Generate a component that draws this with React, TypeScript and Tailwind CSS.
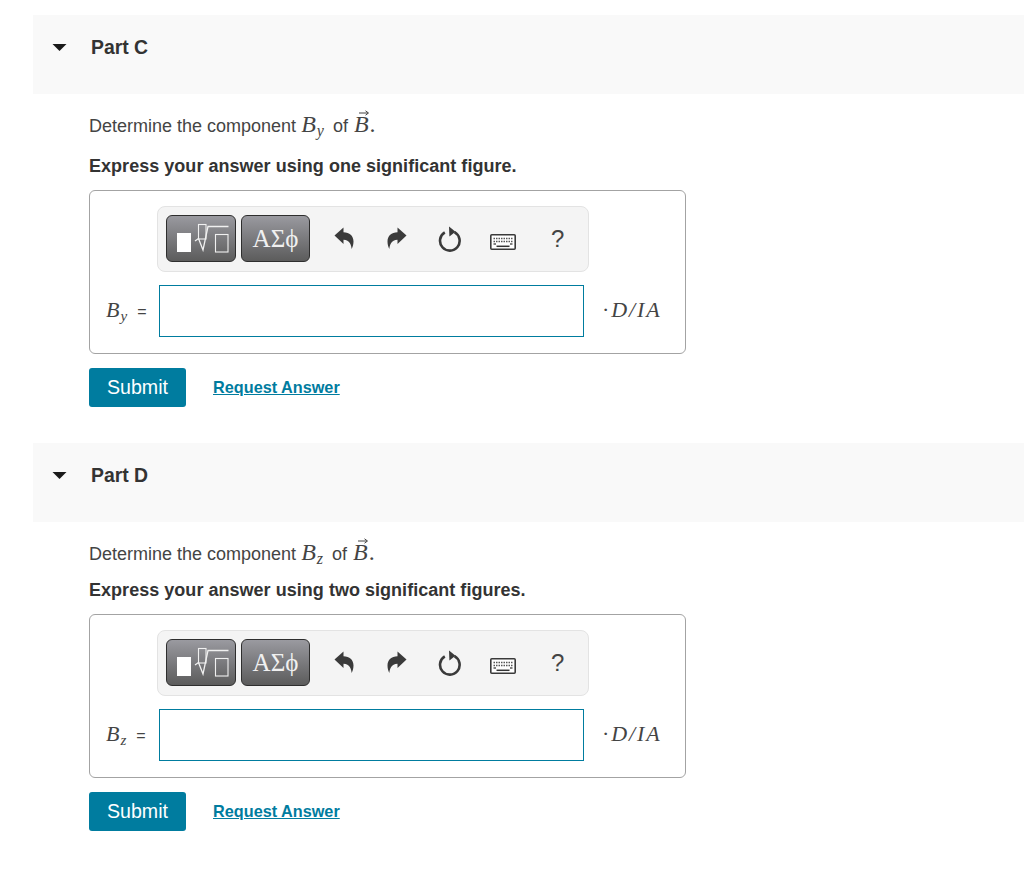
import React from 'react';

const mathFont = "font-['Liberation_Serif',serif] italic";

function Triangle() {
  return (
    <svg width="15" height="7" viewBox="0 0 15 7" className="shrink-0">
      <path d="M0.5 0H14.5L7.5 7Z" fill="#1a1a1a" />
    </svg>
  );
}

function UndoIcon({ flip }: { flip?: boolean }) {
  return (
    <svg width="20" height="24" viewBox="0 0 20 24" className={flip ? '-scale-x-100' : ''}>
      <path d="M0.5 9.5 L9.5 1.5 V6.2 C15.5 6.4 19.5 9.6 19.5 15.5 C19.5 18.5 18.6 21.2 17.6 23 C17.4 19 15.8 14.2 9.5 13.8 V18 Z" fill="#3a3a3a" />
    </svg>
  );
}

function ResetIcon() {
  return (
    <svg width="24" height="26" viewBox="0 0 24 26">
      <path d="M16.5 6.2 A9.8 9.8 0 1 1 6.8 6.4" fill="none" stroke="#3a3a3a" strokeWidth="2.6" />
      <path d="M11 0.5 L17.5 5.8 L11.4 10.5 Z" fill="#3a3a3a" />
    </svg>
  );
}

function KeyboardIcon() {
  return (
    <svg width="26" height="16" viewBox="0 0 26 16">
      <rect x="0.8" y="0.8" width="24.4" height="14.4" rx="1" fill="#fff" stroke="#3a3a3a" strokeWidth="1.6" />
      <path d="M3.5 4.5H22.5M3.5 7.5H22.5" stroke="#555" strokeWidth="1.6" strokeDasharray="1.5 1" />
      <path d="M20 10H22.5M3.5 10H6" stroke="#555" strokeWidth="1.5" />
      <path d="M6.5 12.3H19.5" stroke="#333" strokeWidth="1.5" />
    </svg>
  );
}

function TemplateIcon() {
  return (
    <svg width="68" height="45" viewBox="0 0 68 45">
      <rect x="10" y="17" width="14" height="19" fill="#fff" />
      <rect x="31.5" y="8.5" width="7.5" height="14.5" fill="none" stroke="#f0f0f0" strokeWidth="1.1" />
      <path d="M28 25 L31.5 22.5 L36 34 L41 10.5 H61.5" fill="none" stroke="#f0f0f0" strokeWidth="1.3" />
      <rect x="48.5" y="18.5" width="12.5" height="17.5" fill="none" stroke="#f0f0f0" strokeWidth="1.1" />
    </svg>
  );
}

function InlineSymbol({ sub }: { sub: string }) {
  return (
    <span className={`${mathFont} text-[24px] leading-none text-[#444] inline-flex items-baseline mr-[4px]`}>
      B
      <span className="text-[16px] leading-none ml-[1px] translate-y-[4px] inline-block">{sub}</span>
    </span>
  );
}

function VectorB() {
  return (
    <span className={`${mathFont} relative text-[24px] leading-none text-[#444] ml-[1px] mr-[1px]`}>
      B
      <span className="absolute left-[5px] top-[-2px]">
        <svg width="10" height="7" viewBox="0 0 10 7" className="block">
          <path d="M0 4H9M6.5 1.8L9.5 4L6.5 6.2" fill="none" stroke="#444" strokeWidth="1" />
        </svg>
      </span>
    </span>
  );
}

function AnswerBox({ sub }: { sub: string }) {
  return (
    <div className="w-[597px] h-[164px] rounded-[6px] border border-[#a3a3a3] pt-[15px] flex flex-col">
      <div className="ml-[67px] w-[432px] h-[66px] rounded-[8px] border border-[#e3e3e3] bg-[#f4f4f4] flex items-start pt-[8px] pl-[8px]">
        <div className="w-[70px] h-[47px] rounded-[6px] border border-[#2e2e2e] bg-gradient-to-b from-[#9a9aa0] to-[#5c5c5c]">
          <TemplateIcon />
        </div>
        <div className="ml-[5px] w-[69px] h-[47px] rounded-[6px] border border-[#2e2e2e] bg-gradient-to-b from-[#9a9aa0] to-[#5c5c5c] flex items-center justify-center font-['Liberation_Serif',serif] text-[25px] text-[#f0f0f0]">
          ΑΣϕ
        </div>
        <div className="ml-[24px] mt-[11px] w-[20px] flex justify-center"><UndoIcon /></div>
        <div className="ml-[33px] mt-[11px] w-[20px] flex justify-center"><UndoIcon flip /></div>
        <div className="ml-[31px] mt-[11px] w-[24px] flex justify-center"><ResetIcon /></div>
        <div className="ml-[28px] mt-[19px] w-[26px] flex justify-center"><KeyboardIcon /></div>
        <div className="ml-[35px] mt-[6px] font-['Liberation_Sans',sans-serif] text-[24px] text-[#444]">?</div>
      </div>
      <div className="mt-[13px] flex items-center">
        <div className="w-[69px] pl-[16px] flex items-baseline whitespace-nowrap -mt-[3px]">
          <span className={`${mathFont} text-[22px] leading-none text-[#444]`}>B</span>
          <span className={`${mathFont} text-[15px] leading-none text-[#444] ml-[1px] translate-y-[4px]`}>{sub}</span>
          <span className="ml-[10px] text-[16px] leading-none text-[#444]">=</span>
        </div>
        <div className="w-[425px] h-[52px] border border-[#007c9f] bg-white" />
        <div className={`${mathFont} ml-[18px] -mt-[3px] text-[22px] leading-none text-[#444] tracking-[1.9px] whitespace-nowrap`}>
          <span className="not-italic">·</span>D/IA
        </div>
      </div>
    </div>
  );
}

function Part({ title, sub, fig, textGap, boxGap, titleGap }: { title: string; sub: string; fig: string; textGap: string; boxGap: string; titleGap: string }) {
  return (
    <section>
      <div className="ml-[33px] h-[79px] bg-[#f9f9f9] flex items-start pt-[22px] pl-[19px]">
        <div className="h-[20px] flex items-center"><Triangle /></div>
        <h2 className={`ml-[24px] ${titleGap} text-[19.4px] leading-[20px] font-bold text-[#333]`}>{title}</h2>
      </div>
      <div className="ml-[89px]">
        <p className="mt-[18px] h-[26px] leading-[26px] text-[18px] text-[#444] whitespace-nowrap">
          Determine the component <InlineSymbol sub={sub} /> of <VectorB /><span className="font-['Liberation_Serif',serif] text-[24px] leading-none">.</span>
        </p>
        <p className={`${textGap} text-[18px] leading-[22px] font-bold text-[#333] tracking-[0.03px]`}>Express your answer using {fig}.</p>
        <div className={boxGap}><AnswerBox sub={sub} /></div>
        <div className="mt-[14px] flex items-center">
          <button className="w-[97px] h-[39px] rounded-[3px] bg-[#007c9f] text-white text-[19.6px]">Submit</button>
          <a className="ml-[27px] text-[16.25px] font-bold text-[#007c9f] underline">Request Answer</a>
        </div>
      </div>
    </section>
  );
}

export default function App() {
  return (
    <div className="w-[1024px] h-[873px] bg-white overflow-hidden pt-[15px] font-['Liberation_Sans',sans-serif] flex flex-col gap-[36px]">
      <Part title="Part C" sub="y" fig="one significant figure" textGap="mt-[17px]" boxGap="mt-[13px]" titleGap="mt-0" />
      <Part title="Part D" sub="z" fig="two significant figures" textGap="mt-[13px]" boxGap="mt-[13px]" titleGap="mt-0" />
    </div>
  );
}
